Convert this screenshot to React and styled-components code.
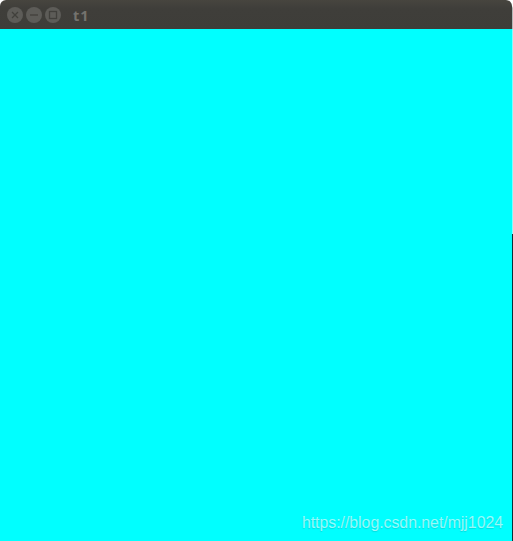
import React from "react";
import styled, { createGlobalStyle } from "styled-components";

const Global = createGlobalStyle`
  html, body { margin: 0; padding: 0; background: #fff; }
  #root { width: 513px; height: 541px; overflow: hidden; }
`;
const Shot = styled.div`
  display: flex;
  width: 513px;
  height: 541px;
`;
const Window = styled.div`
  flex: 1;
  display: flex;
  flex-direction: column;
  position: relative;
`;
const EdgeStrip = styled.div`
  width: 1px;
  display: flex;
  flex-direction: column;
`;
const EdgeCap = styled.div`
  height: 29px;
  background: linear-gradient(#fff 6px, #b4b8b8 8px);
`;
const EdgeTop = styled.div`
  height: 205px;
  background: #80ffff;
`;
const EdgeBottom = styled.div`
  flex: 1;
  background: #0b3038;
`;
const TitleBar = styled.div`
  height: 29px;
  display: flex;
  align-items: center;
  gap: 3px;
  padding: 1px 0 0 7px;
  box-sizing: border-box;
  background: linear-gradient(#47453f, #3f3e3a 30%, #3e3d39);
  border-radius: 6px 6px 0 0;
`;
const Control = styled.div`
  width: 16px;
  height: 16px;
  border-radius: 50%;
  background: #5d5c58;
  display: flex;
  align-items: center;
  justify-content: center;
  svg { display: block; }
`;
const Title = styled.div`
  margin-left: 9px;
  font: bold 14.5px "Noto Sans", sans-serif;
  letter-spacing: 1px;
  color: #74736e;
`;
const Canvas = styled.div`
  flex: 1;
  background: #00ffff;
`;
const Watermark = styled.div`
  position: absolute;
  right: 9px;
  bottom: 9px;
  font: 15.8px "Liberation Sans", sans-serif;
  color: rgba(255, 255, 255, 0.6);
  text-shadow: 0 1px 1px rgba(0, 120, 130, 0.25);
  white-space: nowrap;
`;

const Icon = ({ children }) => (
  <svg width="10" height="10" viewBox="0 0 10 10" fill="none" stroke="#41403c" strokeWidth="1.3">
    {children}
  </svg>
);

export default function App() {
  return (
    <>
      <Global />
      <Shot>
        <Window>
          <TitleBar>
            <Control>
              <Icon><path d="M2 2 L8 8 M8 2 L2 8" /></Icon>
            </Control>
            <Control>
              <Icon><path d="M1 5 H9" /></Icon>
            </Control>
            <Control>
              <Icon><rect x="1.5" y="1.5" width="7" height="7" /></Icon>
            </Control>
            <Title>t1</Title>
          </TitleBar>
          <Canvas />
          <Watermark>https://blog.csdn.net/mjj1024</Watermark>
        </Window>
        <EdgeStrip>
          <EdgeCap />
          <EdgeTop />
          <EdgeBottom />
        </EdgeStrip>
      </Shot>
    </>
  );
}
